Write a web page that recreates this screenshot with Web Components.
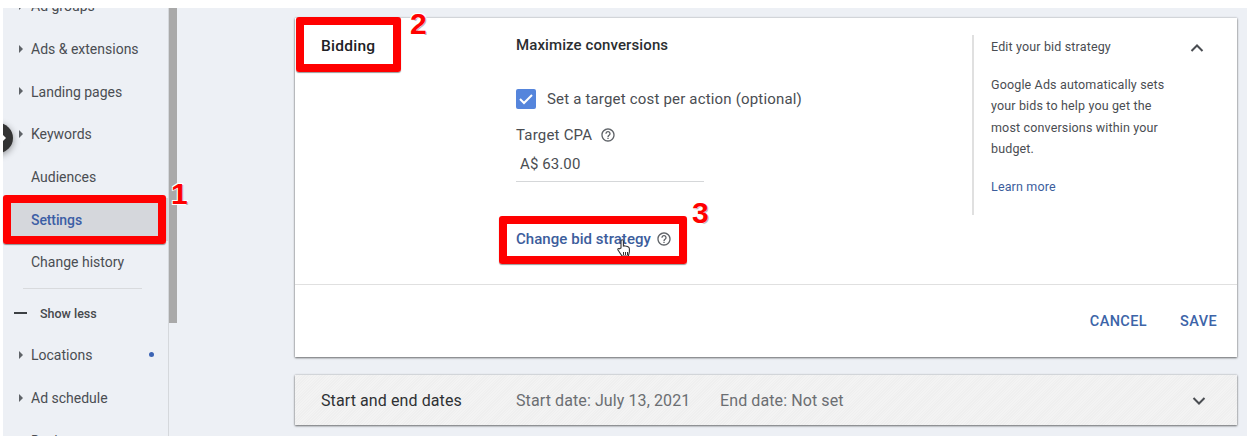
<!DOCTYPE html>
<html>
<head>
<meta charset="utf-8">
<style>
  html, body { margin: 0; padding: 0; background: #fff; }
  body { width: 1247px; height: 436px; overflow: hidden; font-family: Roboto, "Liberation Sans", sans-serif; }
</style>
</head>
<body>
<ads-page>
  <ads-sidebar slot="side">
    <nav-item arrow>Ad groups</nav-item>
    <nav-item arrow>Ads &amp; extensions</nav-item>
    <nav-item arrow>Landing pages</nav-item>
    <nav-item arrow>Keywords</nav-item>
    <nav-item>Audiences</nav-item>
    <nav-item active>Settings</nav-item>
    <nav-item>Change history</nav-item>
    <show-less></show-less>
    <nav-item arrow dot>Locations</nav-item>
    <nav-item arrow>Ad schedule</nav-item>
    <nav-item>Devices</nav-item>
  </ads-sidebar>
  <bid-card slot="main"></bid-card>
  <dates-card slot="main"></dates-card>
  <mark-box slot="over" n="1" style="left:3px;top:195px;width:163px;height:49px" nx="160" ny="-24"></mark-box>
  <mark-box slot="over" n="2" style="left:296px;top:17px;width:105px;height:55px" nx="106" ny="-16"></mark-box>
  <mark-box slot="over" n="3" style="left:499px;top:216px;width:188px;height:48px" nx="185" ny="-26"></mark-box>
</ads-page>

<script>
const helpIcon = `<svg width="16" height="16" viewBox="0 0 24 24" fill="#5f6368"><path d="M11 18h2v-2h-2v2zm1-16C6.48 2 2 6.48 2 12s4.48 10 10 10 10-4.48 10-10S17.52 2 12 2zm0 18c-4.41 0-8-3.59-8-8s3.59-8 8-8 8 3.59 8 8-3.59 8-8 8zm0-14c-2.21 0-4 1.79-4 4h2c0-1.1.9-2 2-2s2 .9 2 2c0 2-3 1.75-3 5h2c0-2.25 3-2.5 3-5 0-2.21-1.79-4-4-4z"/></svg>`

class AdsPage extends HTMLElement {
  constructor() {
    super()
    this.attachShadow({ mode: 'open' })
    this.shadowRoot.innerHTML = `
      <style>
        :host { display: block; position: relative; width: 1247px; height: 436px; overflow: hidden; }
        .shell { display: flex; height: 428px; margin: 8px 0 0 3px; background: #edf0f5; }
        .bar { width: 9px; flex: none; box-sizing: border-box; border-left: 1px solid #d5d8dc; }
        .bar i { display: block; height: 315px; background: #a9a9a9; width: 8px; }
        .main { flex: 1; display: flex; flex-direction: column; gap: 18px; padding: 10px 10px 0 118px; }
      </style>
      <div class="shell">
        <slot name="side"></slot>
        <div class="bar"><i></i></div>
        <div class="main"><slot name="main"></slot></div>
      </div>
      <slot name="over"></slot>
    `
  }
}

class AdsSidebar extends HTMLElement {
  constructor() {
    super()
    this.attachShadow({ mode: 'open' })
    this.shadowRoot.innerHTML = `
      <style>
        :host { display: block; position: relative; width: 165px; flex: none; overflow: hidden; }
        .list { margin-top: -23px; display: flex; flex-direction: column; }
        .pill { position: absolute; left: -20px; top: 115px; width: 30px; height: 30px; border-radius: 50%;
          background: #333; box-shadow: 0 2px 7px rgba(0,0,0,.4); }
        .pill svg { position: absolute; right: 6px; top: 11px; }
      </style>
      <div class="list"><slot></slot></div>
      <div class="pill"><svg width="5" height="8" viewBox="0 0 5 8"><path d="M0 0l4 4-4 4z" fill="#fff"/></svg></div>
    `
  }
}

class NavItem extends HTMLElement {
  constructor() {
    super()
    this.attachShadow({ mode: 'open' })
    this.shadowRoot.innerHTML = `
      <style>
        :host { display: flex; align-items: center; position: relative; height: 42.7px; padding-left: 28px;
          font-size: 14px; color: #4a4d52; }
        :host([active]) { color: #3c5ea5; font-weight: 500; background: #d5d7dc; letter-spacing: -.1px; }
        .arrow { position: absolute; left: 16px; top: 17px; width: 0; height: 0;
          border-left: 4px solid #5f6368; border-top: 4px solid transparent; border-bottom: 4px solid transparent; display: none; }
        :host([arrow]) .arrow { display: block; }
        .dot { position: absolute; left: 146px; top: 18px; width: 5px; height: 5px; border-radius: 50%; background: #3c64b4; display: none; }
        :host([dot]) .dot { display: block; }
      </style>
      <span class="arrow"></span><slot></slot><span class="dot"></span>
    `
  }
}

class ShowLess extends HTMLElement {
  constructor() {
    super()
    this.attachShadow({ mode: 'open' })
    this.shadowRoot.innerHTML = `
      <style>
        :host { display: block; }
        hr { margin: 4px 26px 0 20px; border: 0; border-top: 1px solid #d8dadd; }
        .row { display: flex; align-items: center; gap: 13px; height: 41px; padding: 4px 0 0 11px;
          font-size: 12.5px; font-weight: 500; color: #45484c; }
        .row i { width: 13px; height: 2px; background: #3c4043; }
      </style>
      <hr>
      <div class="row"><i></i><span>Show less</span></div>
    `
  }
}

class BidCard extends HTMLElement {
  constructor() {
    super()
    this.attachShadow({ mode: 'open' })
    this.shadowRoot.innerHTML = `
      <style>
        :host { display: block; background: #fff; height: 339px; box-shadow: 0 1px 2px rgba(0,0,0,.5), 0 0 2px rgba(0,0,0,.25);
          color: #3c4043; font-size: 14px; }
        .top { display: grid; grid-template-columns: 221px 456px 1fr; height: 267px; box-sizing: border-box;
          border-bottom: 1px solid #e0e0e0; }
        .title { padding: 19px 0 0 26px; font-size: 15.5px; font-weight: 500; color: #202124; letter-spacing: .25px; }
        .mid { padding-top: 18px; }
        .strategy { font-weight: 500; font-size: 15px; color: #2b2e31; letter-spacing: .1px; }
        .check { display: flex; align-items: center; gap: 11px; margin-top: 35px; font-size: 15px; letter-spacing: .18px; color: #4a4d52; }
        .box { width: 20px; height: 20px; border-radius: 2px; background: #5585dc; display: flex; align-items: center; justify-content: center; }
        .cpa { display: flex; align-items: center; gap: 8px; margin-top: 17px; font-size: 15px; letter-spacing: .2px; color: #4a4d52; }
        .value { width: 188px; box-sizing: border-box; margin-top: 11px; padding: 0 0 8px 4px; border-bottom: 1px solid #d5d7d9;
          font-size: 15px; letter-spacing: .1px; color: #4a4d52; }
        .change { display: flex; align-items: center; gap: 5px; margin-top: 48px; position: relative; font-size: 15px; font-weight: 500;
          letter-spacing: .05px; color: #3c5d9c; }
        .change svg.hand { position: absolute; left: 99px; top: 8px; }
        .help { margin: 17px 0 69px; border-left: 2px solid #e0e0e0; padding: 0 0 0 17px; position: relative;
          font-size: 12.5px; color: #4a4d52; }
        .help h4 { margin: 0; padding-top: 4px; font: inherit; font-size: 12.5px; letter-spacing: .15px; }
        .help p { margin: 20px 0 0; line-height: 21.4px; width: 190px; letter-spacing: .15px; }
        .help a { display: block; margin-top: 19px; color: #3c5d9c; letter-spacing: .15px; }
        .help svg { position: absolute; left: 216px; top: 8px; }
        .foot { display: flex; justify-content: flex-end; align-items: center; gap: 33px; height: 72px; padding-right: 20px;
          font-size: 14.5px; font-weight: 500; letter-spacing: .4px; color: #3c64a8; }
      </style>
      <div class="top">
        <div class="title">Bidding</div>
        <div class="mid">
          <div class="strategy">Maximize conversions</div>
          <div class="check"><span class="box"><svg width="16" height="14" viewBox="0 0 16 14"><path d="M2 7l4 4 8-8" stroke="#fff" stroke-width="2" fill="none"/></svg></span>Set a target cost per action (optional)</div>
          <div class="cpa">Target CPA ${helpIcon}</div>
          <div class="value">A$ 63.00</div>
          <div class="change">Change bid strategy ${helpIcon}
            <svg class="hand" width="19" height="20" viewBox="0 0 17 20"><path d="M5 10V3a1.200 1.200 0 0 1 2.400 0v5l1-.3 1 .3 1 .2 1 .4 1 .4c.8.4 1 1 1 2v3l-1 4H6l-4-6c-.5-1 .5-2 1.500-1.200z" fill="#fff" stroke="#333" stroke-width="1.100"/><path d="M7.500 14v3M9.500 14v3M11.500 14v3" stroke="#333"/></svg>
          </div>
        </div>
        <div class="help">
          <h4>Edit your bid strategy</h4>
          <svg width="14" height="10" viewBox="0 0 14 10"><path d="M1.500 8L7 2.500 12.500 8" stroke="#4a4d52" stroke-width="2" fill="none"/></svg>
          <p>Google Ads automatically sets your bids to help you get the most conversions within your budget.</p>
          <a>Learn more</a>
        </div>
      </div>
      <div class="foot"><span>CANCEL</span><span>SAVE</span></div>
    `
  }
}

class DatesCard extends HTMLElement {
  constructor() {
    super()
    this.attachShadow({ mode: 'open' })
    this.shadowRoot.innerHTML = `
      <style>
        :host { display: flex; align-items: center; height: 50px; padding-left: 26px; position: relative; font-size: 16px; letter-spacing: .1px;
          color: #6b6e72; box-shadow: 0 1px 2px rgba(0,0,0,.5), 0 0 2px rgba(0,0,0,.25);
          background: repeating-linear-gradient(135deg, #f3f3f3 0 1px, #efefef 1px 2px); }
        .name { width: 195px; color: #2e3134; }
        .start { width: 204px; }
        svg { position: absolute; right: 31px; top: 21px; }
      </style>
      <span class="name">Start and end dates</span>
      <span class="start">Start date: July 13, 2021</span>
      <span>End date: Not set</span>
      <svg width="14" height="10" viewBox="0 0 14 10"><path d="M1.500 2L7 7.500 12.500 2" stroke="#4a4d52" stroke-width="2" fill="none"/></svg>
    `
  }
}

class MarkBox extends HTMLElement {
  constructor() {
    super()
    this.attachShadow({ mode: 'open' })
    const n = this.getAttribute('n')
    this.shadowRoot.innerHTML = `
      <style>
        :host { display: block; position: absolute; box-sizing: border-box; border: 8px solid #f00; border-radius: 3px;
          box-shadow: 0 1px 1px rgba(0,0,0,.4); }
        .num { position: absolute; font: 700 30px/1 "Liberation Sans", sans-serif; color: #f00;
          text-shadow: -1px 1px 0 #fff, 1px 1px 0 #bbb, -1px -1px 0 #fff, 1px -1px 0 #fff; }
      </style>
      <span class="num" style="left:${this.getAttribute('nx')}px;top:${this.getAttribute('ny')}px">${n}</span>
    `
  }
}

customElements.define('ads-page', AdsPage)
customElements.define('ads-sidebar', AdsSidebar)
customElements.define('nav-item', NavItem)
customElements.define('show-less', ShowLess)
customElements.define('bid-card', BidCard)
customElements.define('dates-card', DatesCard)
customElements.define('mark-box', MarkBox)
</script>
</body>
</html>
